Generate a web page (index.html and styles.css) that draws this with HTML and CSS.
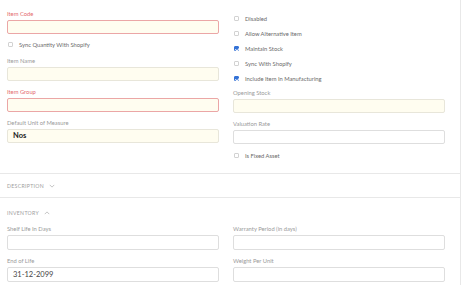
FILE: index.html
```html
<!DOCTYPE html>
<html lang="en">
<head>
    <meta charset="UTF-8">
    <title>Item</title>
    <link rel="stylesheet" href="styles.css">
</head>
<body>
    <div class="card">
        <div class="section">
            <div class="grid">
                <div class="col">
                    <div class="field">
                        <label class="label required">Item Code</label>
                        <div class="input warn"></div>
                    </div>
                    <div class="check check-after">
                        <span class="box"></span>
                        <span>Sync Quantity With Shopify</span>
                    </div>
                    <div class="field">
                        <label class="label">Item Name</label>
                        <div class="input soft"></div>
                    </div>
                    <div class="field">
                        <label class="label required">Item Group</label>
                        <div class="input warn"></div>
                    </div>
                    <div class="field">
                        <label class="label">Default Unit of Measure</label>
                        <div class="input soft bold">Nos</div>
                    </div>
                </div>
                <div class="col col-right">
                    <div class="check"><span class="box"></span><span>Disabled</span></div>
                    <div class="check"><span class="box"></span><span>Allow Alternative Item</span></div>
                    <div class="check"><span class="box on"></span><span>Maintain Stock</span></div>
                    <div class="check"><span class="box"></span><span>Sync With Shopify</span></div>
                    <div class="check"><span class="box on"></span><span>Include Item In Manufacturing</span></div>
                    <div class="field field-after-checks">
                        <label class="label">Opening Stock</label>
                        <div class="input soft"></div>
                    </div>
                    <div class="field">
                        <label class="label">Valuation Rate</label>
                        <div class="input"></div>
                    </div>
                    <div class="check check-last"><span class="box"></span><span>Is Fixed Asset</span></div>
                </div>
            </div>
        </div>

        <div class="section-head">
            <span>Description</span>
            <svg class="chev" viewBox="0 0 8 5"><path d="M1 1l3 3 3-3"/></svg>
        </div>

        <div class="section section-open">
            <div class="section-head flat">
                <span>Inventory</span>
                <svg class="chev" viewBox="0 0 8 5"><path d="M1 4l3-3 3 3"/></svg>
            </div>
            <div class="grid">
                <div class="field">
                    <label class="label">Shelf Life In Days</label>
                    <div class="input tall"></div>
                </div>
                <div class="field">
                    <label class="label">Warranty Period (in days)</label>
                    <div class="input tall"></div>
                </div>
                <div class="field last">
                    <label class="label">End of Life</label>
                    <div class="input tall value">31-12-2099</div>
                </div>
                <div class="field last">
                    <label class="label">Weight Per Unit</label>
                    <div class="input tall"></div>
                </div>
            </div>
        </div>
    </div>
</body>
</html>
```

FILE: styles.css
```css
:root {
    --border: #e8e8e8;
    --input-border: #dedede;
    --soft: #fffdf0;
    --red: #e46a6c;
    --red-border: #eba6a6;
    --label: #9a9a9a;
    --text: #6a6a6a;
    --blue: #3472d6;
}

* {
    margin: 0;
    padding: 0;
    box-sizing: border-box;
}

body {
    font-family: 'Lato', 'Open Sans', sans-serif;
    background: #fff;
    color: var(--text);
    overflow: hidden;
}

.card {
    width: 461px;
    min-height: 285px;
    border-right: 1px solid var(--border);
}

.section {
    padding: 10px 15px 10px 7px;
    border-bottom: 1px solid var(--border);
}

.grid {
    display: grid;
    grid-template-columns: 212px 212px;
    column-gap: 14px;
}

.col {
    display: flex;
    flex-direction: column;
}

.col-right {
    padding-top: 1px;
}

.field {
    display: flex;
    flex-direction: column;
    margin-bottom: 7px;
}

.field.last {
    margin-bottom: 0;
}

.field-after-checks {
    margin-top: 3px;
}

.label {
    font-size: 5.8px;
    line-height: 8px;
    height: 8px;
    margin-bottom: 2px;
    color: var(--label);
}

.label.required {
    color: var(--red);
}

.input {
    height: 14px;
    border: 1px solid var(--input-border);
    border-radius: 2px;
    background: #fff;
    padding: 0 5px;
    font-size: 7.5px;
    line-height: 12px;
    color: #333;
}

.input.tall {
    height: 15px;
    line-height: 13px;
}

.input.soft {
    background: var(--soft);
    border-color: #e8e6da;
}

.input.warn {
    background: var(--soft);
    border-color: var(--red-border);
}

.input.bold {
    font-weight: 700;
    color: #222;
}

.input.value {
    color: #444;
}

.check {
    display: flex;
    align-items: center;
    gap: 6px;
    height: 15px;
    font-size: 5.8px;
    color: var(--text);
    padding-left: 1px;
}

.check-after {
    margin: -4px 0 5px;
}

.check-last {
    margin-top: -3px;
}

.box {
    width: 5px;
    height: 5px;
    border: 1px solid #d2d2d2;
    border-radius: 1px;
    background: #fff;
    position: relative;
}

.box.on {
    background: var(--blue);
    border-color: var(--blue);
}

.box.on::after {
    content: "";
    position: absolute;
    left: 0.5px;
    top: -0.5px;
    width: 1.5px;
    height: 2.5px;
    border: solid #fff;
    border-width: 0 1px 1px 0;
    transform: rotate(40deg);
}

.section-head {
    display: flex;
    align-items: center;
    gap: 5px;
    height: 24px;
    padding-left: 7px;
    border-bottom: 1px solid var(--border);
    font-size: 5.2px;
    letter-spacing: 0.3px;
    text-transform: uppercase;
    color: #a0a0a0;
}

.section-head.flat {
    border-bottom: none;
    height: 10px;
    padding-left: 0;
    margin: 0 0 7px;
}

.section-open {
    padding-top: 10px;
    padding-bottom: 3px;
    border-bottom: none;
}

.chev {
    width: 6px;
    height: 4px;
    fill: none;
    stroke: #b0b0b0;
    stroke-width: 1;
}
```
